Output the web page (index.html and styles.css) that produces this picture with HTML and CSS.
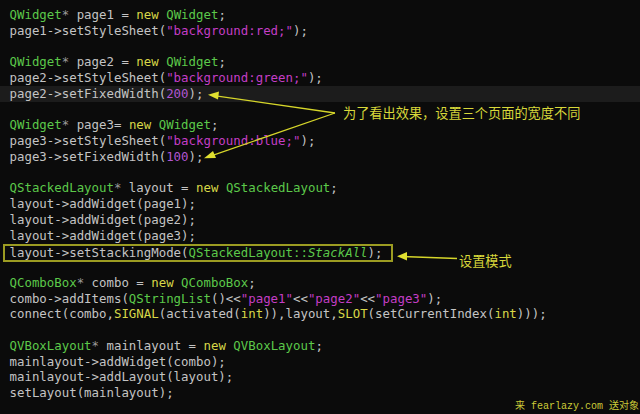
FILE: index.html
```html
<!DOCTYPE html>
<html>
<head>
<meta charset="utf-8">
<link rel="stylesheet" href="styles.css">
</head>
<body>
<div class="screen">
<pre class="code"><div class="ln"><span class="t">QWidget</span><span class="op">*</span> page1 = <span class="k">new</span> <span class="t">QWidget</span>;</div><div class="ln">page1-&gt;setStyleSheet(<span class="s">"background:red;"</span>);</div><div class="ln"> </div><div class="ln"><span class="t">QWidget</span><span class="op">*</span> page2 = <span class="k">new</span> <span class="t">QWidget</span>;</div><div class="ln">page2-&gt;setStyleSheet(<span class="s">"background:green;"</span>);</div><div class="ln cur">page2-&gt;setFixedWidth(<span class="n">200</span>);</div><div class="ln"> </div><div class="ln"><span class="t">QWidget</span><span class="op">*</span> page3= <span class="k">new</span> <span class="t">QWidget</span>;</div><div class="ln">page3-&gt;setStyleSheet(<span class="s">"background:blue;"</span>);</div><div class="ln">page3-&gt;setFixedWidth(<span class="n">100</span>);</div><div class="ln"> </div><div class="ln"><span class="t">QStackedLayout</span><span class="op">*</span> layout = <span class="k">new</span> <span class="t">QStackedLayout</span>;</div><div class="ln">layout-&gt;addWidget(page1);</div><div class="ln">layout-&gt;addWidget(page2);</div><div class="ln">layout-&gt;addWidget(page3);</div><div class="ln"><span class="boxed">layout-&gt;setStackingMode(<span class="t">QStackedLayout::<i>StackAll</i></span>);</span></div><div class="ln"> </div><div class="ln"><span class="t">QComboBox</span><span class="op">*</span> combo = <span class="k">new</span> <span class="t">QComboBox</span>;</div><div class="ln">combo-&gt;addItems(<span class="t">QStringList</span>()&lt;&lt;<span class="s">"page1"</span>&lt;&lt;<span class="s">"page2"</span>&lt;&lt;<span class="s">"page3"</span>);</div><div class="ln">connect(combo,<span class="k">SIGNAL</span>(activated(<span class="k">int</span>)),layout,<span class="k">SLOT</span>(setCurrentIndex(<span class="k">int</span>)));</div><div class="ln"> </div><div class="ln"><span class="t">QVBoxLayout</span><span class="op">*</span> mainlayout = <span class="k">new</span> <span class="t">QVBoxLayout</span>;</div><div class="ln">mainlayout-&gt;addWidget(combo);</div><div class="ln">mainlayout-&gt;addLayout(layout);</div><div class="ln">setLayout(mainlayout);</div></pre>

<svg class="arrows" width="640" height="414" viewBox="0 0 640 414">
  <g stroke="#d6d62a" stroke-width="1.3" fill="none">
    <line x1="335" y1="113" x2="214" y2="95.6"/>
    <line x1="335" y1="113" x2="209" y2="156.6"/>
    <line x1="457" y1="258.5" x2="402" y2="256.5"/>
  </g>
  <g fill="#e0e030">
    <polygon points="208,94.8 219,91.5 218,99.5"/>
    <polygon points="204,158.3 213,151 216,158"/>
    <polygon points="397,256.3 407,252 407,260.5"/>
  </g>
</svg>

<div class="note note1">为了看出效果，设置三个页面的宽度不同</div>
<div class="note note2">设置模式</div>
<div class="mark">来 fearlazy.com 送对象</div>
</div>
</body>
</html>
```

FILE: styles.css
```css
html, body {
  margin: 0;
  padding: 0;
  background: #0b0b0b;
}

.screen {
  position: relative;
  width: 640px;
  height: 414px;
  overflow: hidden;
  background: #0b0b0b;
}

.code {
  margin: 0;
  padding: 7px 0 0 0;
  font-family: "DejaVu Sans Mono", "Liberation Mono", monospace;
  font-size: 12.4px;
  line-height: 15.75px;
  color: #c4c4c4;
}

.ln {
  height: 15.75px;
  padding-left: 9.5px;
  white-space: pre;
}

.ln.cur {
  background: #1c1c1c;
}

.t { color: #5cc94a; }
.k { color: #d8d848; }
.s { color: #c43ec6; }
.n { color: #b255d2; }
.op { color: #9a9a9a; }

.t i { font-style: italic; }

.boxed {
  display: inline-block;
  margin-left: -7px;
  padding: 0 8px 0 5px;
  border: 2px solid #9c9c22;
  line-height: 14px;
  margin-top: 1px;
}

.arrows {
  position: absolute;
  left: 0;
  top: 0;
}

.note {
  position: absolute;
  font-family: "Noto Sans CJK SC", sans-serif;
  font-size: 13.2px;
  line-height: 16px;
  color: #d8d83a;
  white-space: nowrap;
}

.note1 { left: 343px; top: 105px; }
.note2 { left: 459px; top: 253px; }

.mark {
  position: absolute;
  right: 1px;
  top: 400px;
  font-family: "Liberation Mono", "Noto Sans CJK SC", monospace;
  font-size: 10px;
  line-height: 14px;
  color: #cccc38;
  white-space: nowrap;
}
```
